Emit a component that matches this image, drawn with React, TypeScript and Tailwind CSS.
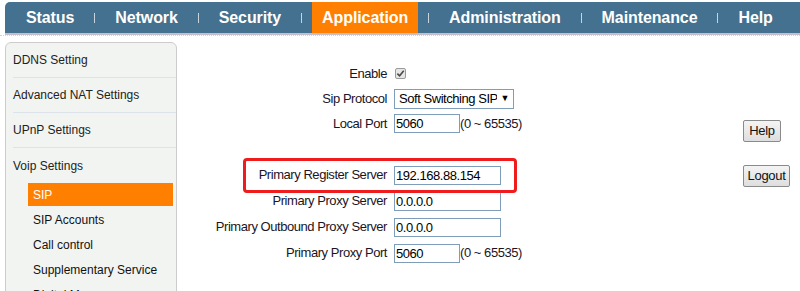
const navItems = ['Status', 'Network', 'Security', 'Application', 'Administration', 'Maintenance', 'Help']

const sideItems = ['DDNS Setting', 'Advanced NAT Settings', 'UPnP Settings']
const subItems = ['SIP Accounts', 'Call control', 'Supplementary Service', 'Digital Map']

function TextBox({ value, w }: { value: string; w: string }) {
  return (
    <div
      className={`${w} h-[19px] border border-[#7f9db9] bg-white pl-[1px] text-[13px] leading-[17px] tracking-[-0.45px] text-black`}
    >
      {value}
    </div>
  )
}

function Row({ label, children, tall }: { label: string; children: React.ReactNode; tall?: boolean }) {
  return (
    <div className={`flex items-center ${tall ? 'h-[26px]' : 'h-[25px]'}`}>
      <div className="w-[211px] shrink-0 pr-[1px] text-right text-[13px] tracking-[-0.45px] text-[#1c1424]">
        {label}
      </div>
      <div className="ml-[6px] flex items-center">{children}</div>
    </div>
  )
}

function Btn({ label, w }: { label: string; w: string }) {
  return (
    <button
      className={`${w} h-[22px] rounded-[2px] border border-[#8a8a8a] bg-gradient-to-b from-[#f4f4f4] to-[#dedede] text-[13px] leading-[20px] tracking-[-0.3px] text-[#111]`}
    >
      {label}
    </button>
  )
}

export default function App() {
  return (
    <div className="h-[291px] w-[800px] overflow-hidden bg-white font-['Liberation_Sans',Arial,sans-serif]">
      {/* top menu */}
      <div className="pt-[2px]">
        <div className="ml-[5px] flex h-[31px] items-stretch rounded-tl-[5px] bg-[#43718f] pl-[11px]">
          {navItems.map((item, i) => (
            <div key={item} className="flex items-center">
              {i > 0 && <span className="mx-[10px] h-[10px] w-[1px] bg-[#c8d4de]" />}
              <div
                className={`flex h-full items-center px-[10px] text-[16px] font-bold tracking-[-0.1px] text-white ${
                  item === 'Application' ? 'bg-[#ff8000]' : ''
                }`}
              >
                {item}
              </div>
            </div>
          ))}
        </div>
        <div className="ml-[5px] h-[2px] bg-[#c6bfcb]" />
        <div className="h-[2px] border-t border-dotted border-[#bfe3b5]" />
      </div>

      <div className="flex">
        {/* left menu */}
        <div className="ml-[5px] mt-[5px] h-[260px] w-[172px] shrink-0 rounded-t-[6px] border border-[#cccccc] bg-[#f2f4f1]">
          {sideItems.map((s) => (
            <div key={s} className="ml-[7px] flex h-[35px] items-center border-b border-[#dde3ea] text-[12px] text-[#222]">
              {s}
            </div>
          ))}
          <div className="ml-[7px] flex h-[35px] items-center text-[12px] text-[#222]">Voip Settings</div>
          <div className="ml-[22px] mr-[3px] flex h-[23px] items-center bg-[#ff8000] pl-[5px] text-[12px] text-white">
            SIP
          </div>
          {subItems.map((s) => (
            <div key={s} className="ml-[27px] flex h-[25px] items-center pt-[2px] text-[12px] text-[#111]">
              {s}
            </div>
          ))}
        </div>

        {/* form */}
        <div className="flex-1 pt-[24px]">
          <Row label="Enable">
            <div className="ml-[1px] flex h-[11px] w-[11px] items-center justify-center rounded-[2px] border border-[#9a9a9a] bg-[#e6e6e6]">
              <svg viewBox="0 0 10 10" className="h-[9px] w-[9px]">
                <path d="M1.5 5.2 L4 7.6 L8.6 2" fill="none" stroke="#4a4a4a" strokeWidth="1.8" />
              </svg>
            </div>
          </Row>
          <Row label="Sip Protocol">
            <div className="flex h-[20px] w-[120px] items-center border border-[#7f9db9] bg-white pl-[4px] pr-[4px] text-[13px] tracking-[-0.45px] text-black">
              <span className="flex-1 overflow-hidden whitespace-nowrap">Soft Switching SIP</span>
              <span className="ml-[4px] text-[9px]">▼</span>
            </div>
          </Row>
          <Row label="Local Port">
            <TextBox value="5060" w="w-[66px]" />
            <span className="text-[13px] tracking-[-0.45px] text-[#1c1424]">(0 ~ 65535)</span>
          </Row>
          <div className="h-[26px]" />
          <div className="relative">
            <div className="pointer-events-none absolute left-[66px] top-[-4px] h-[35px] w-[274px] rounded-[4px] border-[3px] border-[#ee1c1c]" />
            <Row label="Primary Register Server" tall>
              <TextBox value="192.168.88.154" w="w-[107px]" />
            </Row>
          </div>
          <Row label="Primary Proxy Server" tall>
            <TextBox value="0.0.0.0" w="w-[107px]" />
          </Row>
          <Row label="Primary Outbound Proxy Server" tall>
            <TextBox value="0.0.0.0" w="w-[107px]" />
          </Row>
          <Row label="Primary Proxy Port" tall>
            <TextBox value="5060" w="w-[66px]" />
            <span className="text-[13px] tracking-[-0.45px] text-[#1c1424]">(0 ~ 65535)</span>
          </Row>
        </div>

        {/* right buttons */}
        <div className="flex w-[57px] shrink-0 flex-col items-start pt-[83px]">
          <Btn label="Help" w="w-[38px]" />
          <div className="h-[23px]" />
          <Btn label="Logout" w="w-[47px]" />
        </div>
      </div>
    </div>
  )
}
